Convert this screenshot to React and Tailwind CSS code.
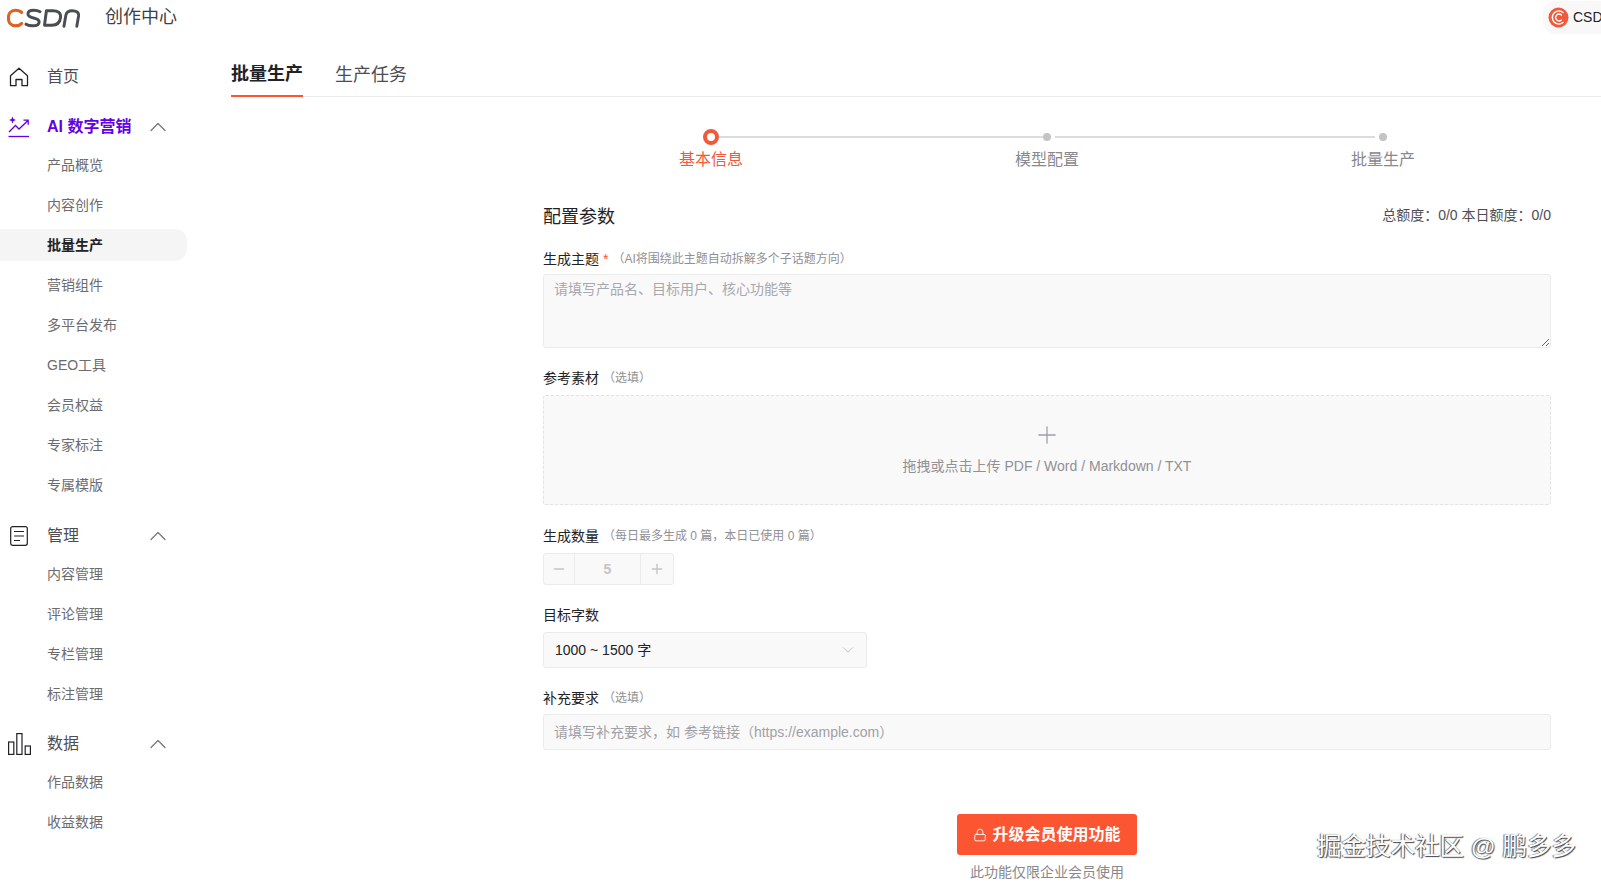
import React from "react";
import { ChevronDown, ChevronUp, Plus, Minus, Lock } from "lucide-react";

function Sub({ children, active }) {
  return (
    <div className={"h-[32px] mb-[8px] flex items-center pl-[47px] text-[14px] rounded-r-[12px] w-[187px] " + (active ? "bg-[#f5f5f5] text-[#222226] font-semibold" : "text-[#6b6b70]")}>
      {children}
    </div>
  );
}

function Group({ icon, label, purple }) {
  return (
    <div className="h-[40px] flex items-center relative w-[187px]">
      <div className="w-[47px] flex justify-center pr-[9px]">{icon}</div>
      <span className={"text-[16px] " + (purple ? "text-[#6300e6] font-bold" : "text-[#4d4d52]")}>{label}</span>
      {label !== "首页" && <ChevronUp className="ml-auto mr-[15px] text-[#77777c]" size={28} strokeWidth={1.1} />}
    </div>
  );
}

function Label({ children, hint, req }) {
  return (
    <div className="flex items-center h-[20px] text-[14px] text-[#222226]">
      <span>{children}</span>
      {req && <span className="text-[#fc5531] ml-[4px]">*</span>}
      {hint && <span className="ml-[4px] text-[12px] text-[#909095]">{hint}</span>}
    </div>
  );
}

const inputCls = "border border-[#ebebeb] bg-[#f9f9f9] rounded-[3px]";

export default function App() {
  return (
    <div className="w-[1601px] h-[884px] overflow-hidden bg-white relative font-['Liberation_Sans','Noto_Sans_CJK_SC',sans-serif] text-[#222226]">
      <header className="h-[35px] flex items-center relative">
        <svg width="74" height="24" viewBox="0 0 76 24" className="ml-[7px] mt-[1px]" fill="none" strokeLinecap="round" strokeLinejoin="round">
          <path d="M15 6.200 C13.500 4.600 11 4 8.600 4 C4 4 1.400 7.600 1.400 12 C1.400 16.600 4 20 8.600 20 C11 20 13.400 19.400 15 17.600" stroke="#e2601f" strokeWidth="3.200" />
          <path d="M34 5.500 C32 4.400 30 4 27.500 4 C24 4 21.500 5.400 21.500 8 C21.500 13.500 33 10.500 33 16 C33 18.800 30 20 26.500 20 C24 20 21.500 19.500 19.500 18.300" stroke="#4a4d52" strokeWidth="3" />
          <path d="M40.500 4.500 L47 4.500 C52.500 4.500 55.500 7 55 11.500 C54.400 16.500 51 19.500 46 19.500 L38.500 19.500 Z" stroke="#4a4d52" strokeWidth="3" />
          <path d="M58.500 20.500 L60.500 9 C61 6 63.500 4.500 67 4.500 C71 4.500 74 6 73.500 10 L71.700 20.500" stroke="#4a4d52" strokeWidth="3" />
        </svg>
        <span className="ml-[24px] text-[18px] text-[#3f3f44]">创作中心</span>
        <div className="absolute left-[1543px] top-[1px] h-[33px] w-[90px] rounded-[12px] bg-[#f8f8f8] flex items-center pl-[5px]">
          <svg width="21" height="21" viewBox="0 0 21 21" fill="none">
            <circle cx="10.500" cy="10.500" r="10" fill="#f2593a" />
            <path d="M15 5.500 A6.500 6.500 0 1 0 15 15.500" stroke="#fff" strokeWidth="1.500" strokeLinecap="round" />
            <path d="M13.400 8 A3.400 3.400 0 1 0 13.400 13" stroke="#fff" strokeWidth="1.400" strokeLinecap="round" />
          </svg>
          <span className="ml-[4px] text-[14px] text-[#222226]">CSDN</span>
        </div>
      </header>

      <div className="flex">
        <aside className="w-[231px] shrink-0 pt-[22px]">
          <Group label="首页" icon={
            <svg width="20" height="20" viewBox="0 0 20 20" fill="none" stroke="#222226" strokeWidth="1.300" strokeLinejoin="round"><path d="M1.500 8.800 10 1.300l8.500 7.500V18.700h-5.500V12.500H7V18.700H1.500Z" /></svg>
          } />
          <div className="h-[10px]" />
          <Group label="AI 数字营销" purple icon={
            <svg width="22" height="22" viewBox="0 0 22 22" fill="none"><path d="M1 16 7.500 9.500l3.500 3.500L20 4.500M15.500 4.200h4.700v4.600" stroke="#6300e6" strokeWidth="1.300" /><path d="M0.500 20.500H21" stroke="#6300e6" strokeWidth="1.300" /><path d="M4.500 0.500 5.500 3l2.500 1-2.500 1-1 2.500-1-2.500L1 4l2.500-1Z" fill="#6300e6" /></svg>
          } />
          <div className="mt-[2px]">
            <Sub>产品概览</Sub>
            <Sub>内容创作</Sub>
            <Sub active>批量生产</Sub>
            <Sub>营销组件</Sub>
            <Sub>多平台发布</Sub>
            <Sub>GEO工具</Sub>
            <Sub>会员权益</Sub>
            <Sub>专家标注</Sub>
            <Sub>专属模版</Sub>
          </div>
          <div className="h-[7px]" />
          <Group label="管理" icon={
            <svg width="18" height="20" viewBox="0 0 18 20" fill="none" stroke="#222226" strokeWidth="1.200"><rect x="0.700" y="0.700" width="16.600" height="18.600" rx="2" /><path d="M4 5.500h10M4 10h10M4 14.500h6" /></svg>
          } />
          <div className="mt-[2px]">
            <Sub>内容管理</Sub>
            <Sub>评论管理</Sub>
            <Sub>专栏管理</Sub>
            <Sub>标注管理</Sub>
          </div>
          <div className="h-[6px]" />
          <Group label="数据" icon={
            <svg width="23" height="22" viewBox="0 0 23 22" fill="none" stroke="#222226" strokeWidth="1.200"><rect x="0.600" y="9" width="5.200" height="12.400" /><rect x="8.800" y="0.600" width="5.200" height="20.800" /><rect x="17.200" y="13" width="5.200" height="8.400" /></svg>
          } />
          <div className="mt-[2px]">
            <Sub>作品数据</Sub>
            <Sub>收益数据</Sub>
          </div>
        </aside>

        <main className="flex-1 min-w-0">
          <div className="h-[62px] border-b border-[#ebebeb] flex items-end gap-[32px] relative">
            <div className="h-[62px] flex items-center pt-[18px] text-[18px] font-semibold border-b-2 border-[#fc5531] mb-[-1px] text-[#222226]">批量生产</div>
            <div className="h-[62px] flex items-center pt-[18px] text-[18px] text-[#4d4d52] mb-[-1px]">生产任务</div>
          </div>

          <div className="ml-[312px] w-[1008px]">
            <div className="relative h-[56px] mt-[31px] grid grid-cols-3 w-[1008px]">
              <div className="absolute left-[176px] top-[8px] w-[328px] h-[2px] bg-[#dcdcdc]" />
              <div className="absolute left-[512px] top-[8px] w-[320px] h-[2px] bg-[#dcdcdc]" />
              {["基本信息", "模型配置", "批量生产"].map((s, i) => (
                <div key={s} className="flex flex-col items-center relative">
                  <div className="h-[18px] flex items-center">
                    {i === 0 ? <div className="w-[16px] h-[16px] rounded-full border-[4px] border-[#f2593a] bg-white" /> : <div className="w-[8px] h-[8px] rounded-full bg-[#c4c4c4]" />}
                  </div>
                  <div className={"mt-[3px] text-[16px] leading-[22px] " + (i === 0 ? "text-[#f2593a]" : "text-[#88888d]")}>{s}</div>
                </div>
              ))}
            </div>

            <div className="flex justify-between items-center h-[30px] mt-[18px]">
              <div className="text-[18px] text-[#222226]">配置参数</div>
              <div className="text-[14px] text-[#4d4d52] mb-[3px]">总额度：0/0 本日额度：0/0</div>
            </div>

            <div className="mt-[17px]"><Label req hint="（AI将围绕此主题自动拆解多个子话题方向）">生成主题</Label></div>
            <div className={inputCls + " h-[74px] mt-[5px] px-[10px] pt-[4px] text-[14px] leading-[20px] text-[#a8a8ad] relative"}>
              请填写产品名、目标用户、核心功能等
              <svg width="9" height="9" viewBox="0 0 9 9" className="absolute right-0 bottom-0" stroke="#666" fill="none"><path d="M1 8 8 1M5 8 8 5" /></svg>
            </div>

            <div className="mt-[20px]"><Label hint="（选填）">参考素材</Label></div>
            <div className="h-[110px] mt-[7px] border border-dashed border-[#e2e2e2] bg-[#f9f9f9] rounded-[3px] flex flex-col items-center pt-[25px]">
              <Plus size={28} strokeWidth={1.100} className="text-[#a0a0a5]" />
              <div className="mt-[7px] text-[14px] text-[#909095] leading-[20px]">拖拽或点击上传 PDF / Word / Markdown / TXT</div>
            </div>

            <div className="mt-[21px]"><Label hint="（每日最多生成 0 篇，本日已使用 0 篇）">生成数量</Label></div>
            <div className={"flex h-[32px] w-[131px] mt-[7px] items-stretch " + inputCls}>
              <div className="w-[31px] flex items-center justify-center border-r border-[#ebebeb]"><Minus size={16} className="text-[#c4c4c4]" /></div>
              <div className="w-[66px] flex items-center justify-center text-[14px] font-bold text-[#c4c4c4] border-r border-[#ebebeb]">5</div>
              <div className="flex-1 flex items-center justify-center"><Plus size={16} className="text-[#c4c4c4]" /></div>
            </div>

            <div className="mt-[20px]"><Label>目标字数</Label></div>
            <div className={"h-[36px] w-[324px] mt-[7px] flex items-center justify-between pl-[11px] pr-[9px] text-[14px] text-[#222226] " + inputCls}>
              <span>1000 ~ 1500 字</span>
              <ChevronDown size={18} className="text-[#b5b5b5]" strokeWidth={1.100} />
            </div>

            <div className="mt-[20px]"><Label hint="（选填）">补充要求</Label></div>
            <div className={"h-[36px] mt-[6px] flex items-center px-[10px] text-[14px] text-[#a0a0a5] " + inputCls}>
              请填写补充要求，如 参考链接（https://example.com）
            </div>

            <div className="flex flex-col items-center mt-[64px]">
              <div className="w-[180px] h-[41px] rounded-[3px] bg-[#fc5531] text-white text-[16px] font-semibold flex items-center justify-center gap-[5px]">
                <Lock size={14} strokeWidth={1.500} />升级会员使用功能
              </div>
              <div className="mt-[8px] text-[14px] text-[#88888d] leading-[18px]">此功能仅限企业会员使用</div>
            </div>
          </div>
        </main>
      </div>

      <div className="absolute left-[1317px] top-[830px] text-[24.500px] leading-[34px] text-white [text-shadow:1px_1px_1px_#444,-1px_0_1px_#666]">掘金技术社区 @ 鹏多多</div>
    </div>
  );
}
